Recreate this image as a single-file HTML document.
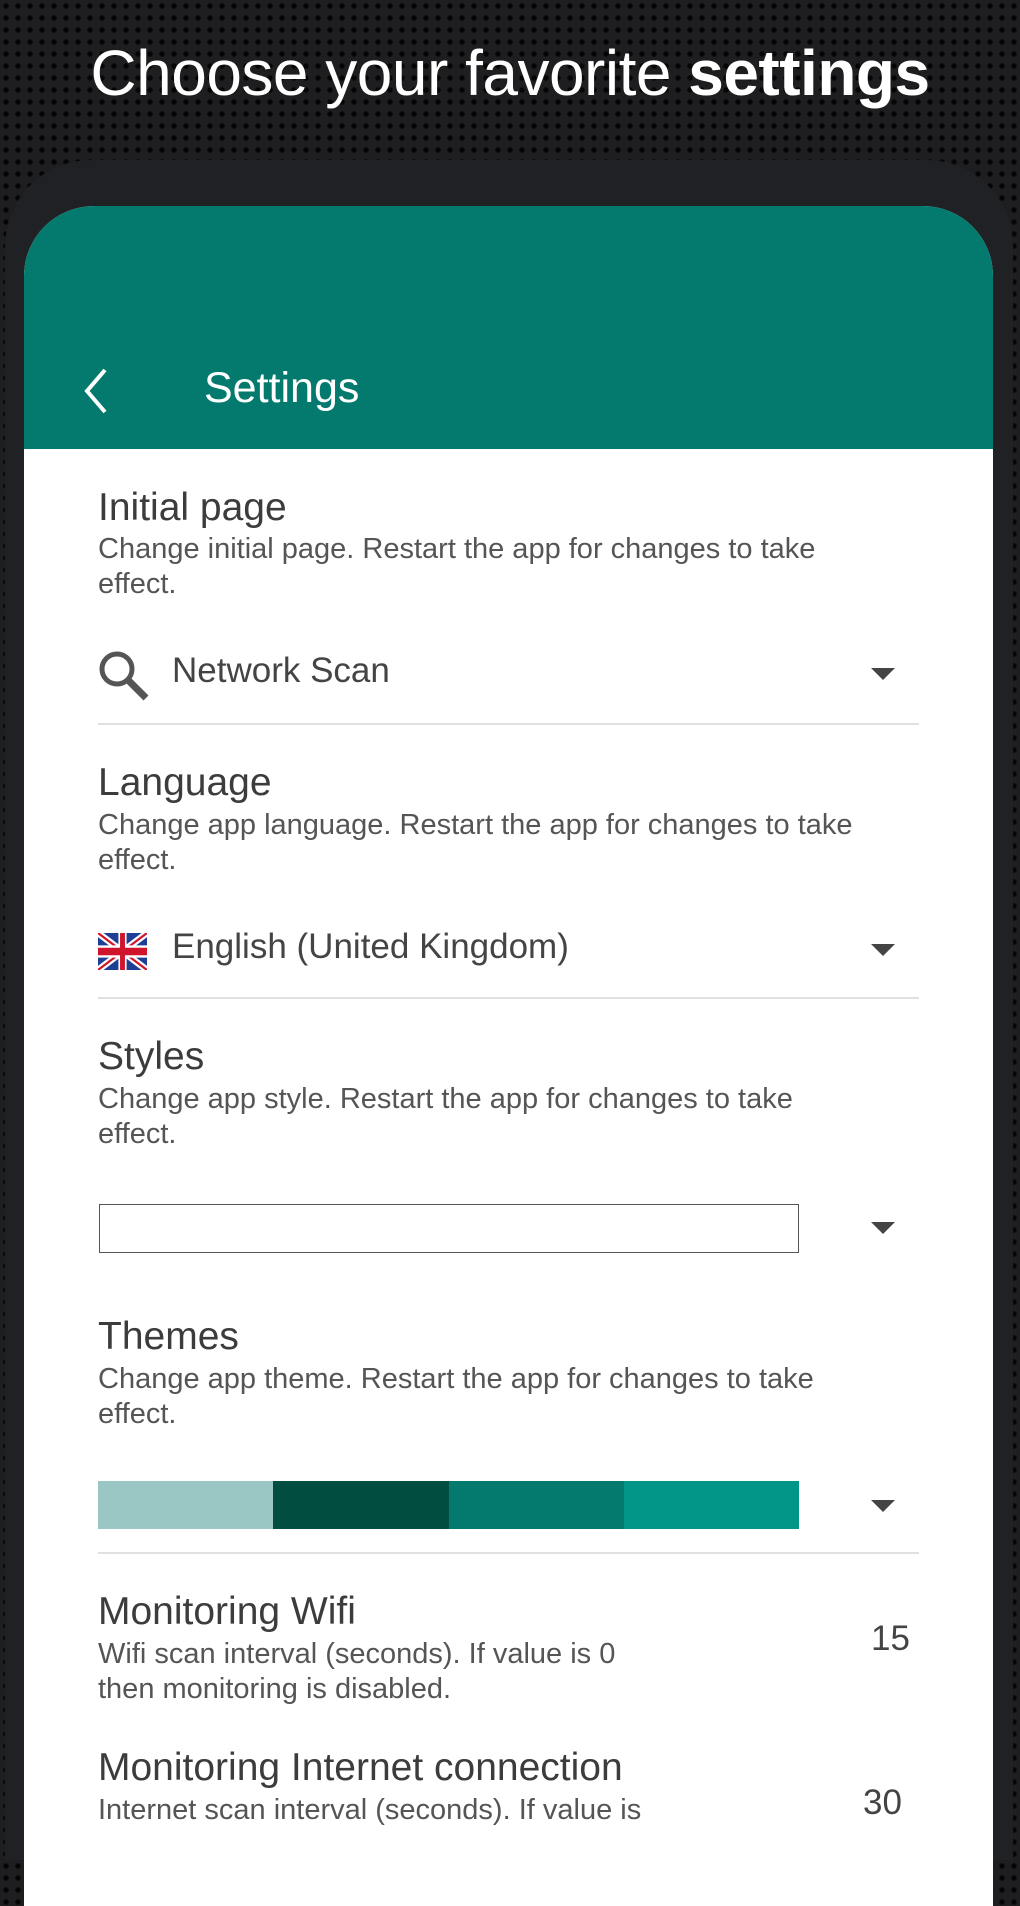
<!DOCTYPE html>
<html><head><meta charset="utf-8"><style>
*{margin:0;padding:0;box-sizing:border-box}
body{width:1020px;height:1813px;overflow:hidden;position:relative;font-family:"Liberation Sans",sans-serif;
background-color:#1e1e20;background-image:radial-gradient(circle,#060606 2.4px,transparent 3px);background-size:12px 12px}
.title{position:absolute;top:36px;left:0;width:1020px;text-align:center;color:#fff;font-size:64px;letter-spacing:-0.5px;white-space:nowrap}
.frame{position:absolute;left:5px;top:160px;width:1008px;height:1700px;background:#202125;border-radius:86px 86px 0 0}
.screen{position:absolute;left:24px;top:206px;width:969px;height:1700px;background:#fff;border-radius:70px 70px 0 0;overflow:hidden}
.hdr{height:243px;background:#037a6d;position:relative}
.hdr .t{position:absolute;left:180px;top:158px;color:#fff;font-size:43px}
.hdr svg{position:absolute;left:55px;top:160px}
.abs{position:absolute;color:#444;white-space:nowrap}
.h{font-size:39px;color:#3c3c3c}
.d{font-size:29px;line-height:35px;color:#555}
.v{font-size:35px;color:#444}
.div{position:absolute;left:74px;width:821px;height:2px;background:#e0e0e0}
.arr{position:absolute;left:847px;width:0;height:0;border-left:12px solid transparent;border-right:12px solid transparent;border-top:12px solid #444}
</style></head><body>
<div class="title">Choose your favorite <b>settings</b></div>
<div class="frame"></div>
<div class="screen">
 <div class="hdr">
  <svg width="40" height="50" viewBox="0 0 40 50"><path d="M26 4 L8 25 L26 46" stroke="#fff" stroke-width="4" fill="none"/></svg>
  <div class="t">Settings</div>
 </div>
 <div class="abs h" style="left:74px;top:280px">Initial page</div>
 <div class="abs d" style="left:74px;top:326px">Change initial page. Restart the app for changes to take<br>effect.</div>
 <svg class="abs" style="left:72px;top:442px" width="56" height="56" viewBox="0 0 56 56"><circle cx="21" cy="21" r="15" stroke="#555" stroke-width="5" fill="none"/><path d="M32 32 L50 50" stroke="#555" stroke-width="7"/></svg>
 <div class="abs v" style="left:148px;top:445px">Network Scan</div>
 <div class="arr" style="top:462px"></div>
 <div class="div" style="top:517px"></div>

 <div class="abs h" style="left:74px;top:555px">Language</div>
 <div class="abs d" style="left:74px;top:602px">Change app language. Restart the app for changes to take<br>effect.</div>
 <svg class="abs" style="left:74px;top:727px" width="49" height="37" viewBox="0 0 60 30" preserveAspectRatio="none"><rect width="60" height="30" fill="#1f3f95"/><path d="M0 0L60 30M60 0L0 30" stroke="#fff" stroke-width="6"/><path d="M0 0L60 30M60 0L0 30" stroke="#cf142b" stroke-width="2"/><path d="M30 0V30M0 15H60" stroke="#fff" stroke-width="10"/><path d="M30 0V30M0 15H60" stroke="#cf142b" stroke-width="6"/></svg>
 <div class="abs v" style="left:148px;top:721px">English (United Kingdom)</div>
 <div class="arr" style="top:738px"></div>
 <div class="div" style="top:791px"></div>

 <div class="abs h" style="left:74px;top:829px">Styles</div>
 <div class="abs d" style="left:74px;top:876px">Change app style. Restart the app for changes to take<br>effect.</div>
 <div class="abs" style="left:75px;top:998px;width:700px;height:49px;border:1.5px solid #555"></div>
 <div class="arr" style="top:1016px"></div>

 <div class="abs h" style="left:74px;top:1109px">Themes</div>
 <div class="abs d" style="left:74px;top:1156px">Change app theme. Restart the app for changes to take<br>effect.</div>
 <div class="abs" style="left:74px;top:1275px;width:701px;height:48px;display:flex">
  <div style="flex:1;background:#9ac6c3"></div><div style="flex:1;background:#014d40"></div><div style="flex:1;background:#037a6d"></div><div style="flex:1;background:#019688"></div>
 </div>
 <div class="arr" style="top:1294px"></div>
 <div class="div" style="top:1346px"></div>

 <div class="abs h" style="left:74px;top:1384px">Monitoring Wifi</div>
 <div class="abs d" style="left:74px;top:1431px">Wifi scan interval (seconds). If value is 0<br>then monitoring is disabled.</div>
 <div class="abs v" style="left:847px;top:1413px">15</div>

 <div class="abs h" style="left:74px;top:1540px">Monitoring Internet connection</div>
 <div class="abs d" style="left:74px;top:1587px">Internet scan interval (seconds). If value is</div>
 <div class="abs v" style="left:839px;top:1577px">30</div>
</div>
</body></html>
